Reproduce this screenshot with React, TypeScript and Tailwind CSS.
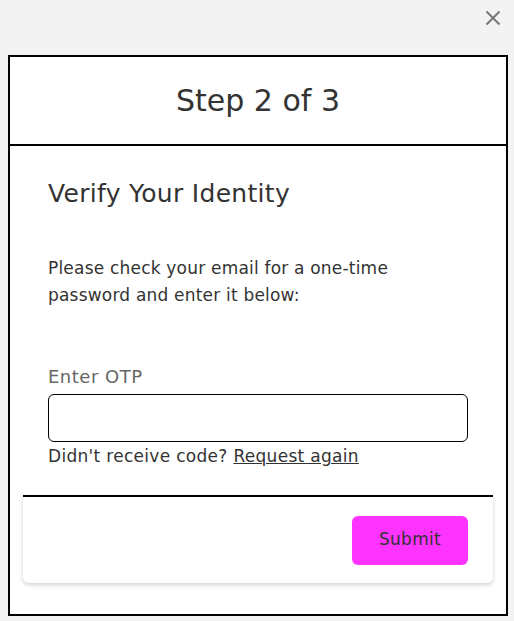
import { useState } from 'react';

export default function App() {
  const [otp, setOtp] = useState('');

  return (
    <div className="min-h-[621px] bg-[#f3f3f3] font-['DejaVu_Sans',sans-serif] text-[#333]">
      {/* Close */}
      <div className="flex h-[55px] justify-end pr-[12px] pt-[9px]">
        <button className="h-[18px] w-[18px] text-[#777]" aria-label="Close">
          <svg viewBox="0 0 18 18" className="h-[18px] w-[18px]" fill="none" stroke="currentColor" strokeWidth="2">
            <path d="M2.5 2.5l13 13M15.5 2.5l-13 13" />
          </svg>
        </button>
      </div>

      {/* Modal */}
      <div className="ml-2 mr-[6px] flex h-[561px] flex-col border-2 border-black bg-white">
        <div className="flex h-[89px] items-center justify-center border-b-2 border-black">
          <h2 className="text-[30px] leading-none">Step 2 of 3</h2>
        </div>

        <div className="flex flex-1 flex-col px-[13px]">
          <div className="px-[25px] pt-[32px]">
            <h3 className="text-[25px] leading-[32px] tracking-[0.3px]">Verify Your Identity</h3>
            <p className="mt-[45px] max-w-[400px] text-[17px] leading-[27px] tracking-[0.2px]">
              Please check your email for a one-time password and enter it below:
            </p>
            <label className="mt-[56px] block text-[18px] leading-[24px] tracking-[0.5px] text-[#666]">Enter OTP</label>
            <input
              value={otp}
              onChange={(e) => setOtp(e.target.value)}
              className="mt-[5px] block h-[48px] w-full rounded-[6px] border border-black px-3 outline-none"
            />
            <p className="mt-[2px] text-[17px] leading-[24px] tracking-[0.3px]">
              Didn't receive code? <a href="#" className="underline">Request again</a>
            </p>
          </div>

          <div className="mt-[27px] flex h-[88px] items-center justify-end rounded-b-[6px] border-t-2 border-black bg-white pr-[25px] shadow-[0_2px_4px_rgba(0,0,0,0.18)]">
            <button className="h-[49px] w-[116px] rounded-[6px] bg-[#ff33ff] text-[17px] tracking-[0.3px] text-[#333]">Submit</button>
          </div>
        </div>
      </div>
    </div>
  );
}
